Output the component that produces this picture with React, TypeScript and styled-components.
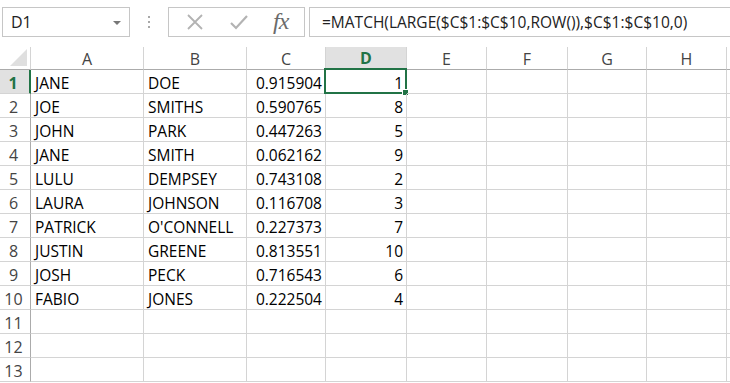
import React from "react";
import styled, { createGlobalStyle } from "styled-components";

const GlobalStyle = createGlobalStyle`
  html, body {
    margin: 0;
    padding: 0;
    background: #ffffff;
    overflow: hidden;
  }
  body {
    font-family: "Open Sans", "Liberation Sans", sans-serif;
  }
`;

const Page = styled.div`
  width: 730px;
  height: 383px;
  overflow: hidden;
  background: #ffffff;
`;

const FormulaBar = styled.div`
  display: flex;
  align-items: flex-start;
  height: 47px;
  padding: 7px 0 0 2px;
  box-sizing: border-box;
`;

const NameBox = styled.div`
  width: 128px;
  height: 30px;
  box-sizing: border-box;
  border: 1px solid #c6c6c6;
  display: flex;
  align-items: center;
  justify-content: space-between;
  padding: 0 8px 0 8px;
  font-size: 16px;
  color: #222;
`;

const Caret = styled.div`
  width: 0;
  height: 0;
  border-left: 4px solid transparent;
  border-right: 4px solid transparent;
  border-top: 4px solid #777;
  margin-top: 1px;
`;

const Dots = styled.div`
  width: 38px;
  height: 30px;
  display: flex;
  flex-direction: column;
  align-items: center;
  justify-content: center;
  gap: 3px;
`;

const Dot = styled.span`
  width: 2px;
  height: 2px;
  background: #a8a8a8;
`;

const ButtonBox = styled.div`
  width: 137px;
  height: 30px;
  box-sizing: border-box;
  border: 1px solid #c6c6c6;
  display: flex;
  align-items: center;
  justify-content: space-around;
  padding: 0 4px;
`;

const Fx = styled.span`
  font-family: "Liberation Serif", "DejaVu Serif", serif;
  font-style: italic;
  font-size: 24px;
  color: #6b6b6b;
  line-height: 1;
  margin-top: -3px;
  letter-spacing: -1px;
`;

const FormulaInput = styled.div`
  flex: 1;
  height: 30px;
  margin-left: 4px;
  box-sizing: border-box;
  border: 1px solid #c6c6c6;
  border-right: none;
  display: flex;
  align-items: center;
  padding-left: 12px;
  font-size: 15.5px;
  color: #222;
  white-space: nowrap;
`;

const Grid = styled.div`
  display: grid;
  grid-template-columns: 31px 113px 103px 79px 81px 80px 81px 79px 80px 60px;
  grid-auto-rows: 24px;
  grid-template-rows: 23px;
`;

const Corner = styled.div`
  position: relative;
  border-right: 1px solid #d4d4d4;
  border-bottom: 1px solid #ababab;
  &::after {
    content: "";
    position: absolute;
    right: 3px;
    bottom: 3px;
    width: 0;
    height: 0;
    border-left: 17px solid transparent;
    border-bottom: 17px solid #dfdfdf;
  }
`;

const ColHead = styled.div<{ $active?: boolean }>`
  display: flex;
  align-items: center;
  justify-content: center;
  font-size: 16px;
  padding-top: 1px;
  color: ${(p) => (p.$active ? "#217346" : "#444")};
  font-weight: ${(p) => (p.$active ? 700 : 400)};
  background: ${(p) => (p.$active ? "#e1e1e1" : "#ffffff")};
  border-right: 1px solid #d4d4d4;
  border-bottom: ${(p) => (p.$active ? "2px solid #217346" : "1px solid #ababab")};
  box-sizing: border-box;
`;

const RowHead = styled.div<{ $active?: boolean }>`
  display: flex;
  align-items: center;
  justify-content: center;
  font-size: 16px;
  padding: 2px 3px 0 0;
  color: ${(p) => (p.$active ? "#217346" : "#444")};
  font-weight: ${(p) => (p.$active ? 700 : 400)};
  background: ${(p) => (p.$active ? "#e1e1e1" : "#ffffff")};
  border-right: ${(p) => (p.$active ? "2px solid #217346" : "1px solid #ababab")};
  border-bottom: 1px solid #d4d4d4;
  box-sizing: border-box;
`;

const Cell = styled.div<{ $num?: boolean }>`
  position: relative;
  display: flex;
  align-items: center;
  justify-content: ${(p) => (p.$num ? "flex-end" : "flex-start")};
  padding: 2px 3px 0 4px;
  font-size: 15.5px;
  color: #000;
  border-right: 1px solid #d4d4d4;
  border-bottom: 1px solid #d4d4d4;
  box-sizing: border-box;
  white-space: nowrap;
  overflow: visible;
`;

const Selection = styled.div`
  position: absolute;
  left: -2px;
  top: -2px;
  right: -1px;
  bottom: -1px;
  border: 2px solid #217346;
  pointer-events: none;
  &::after {
    content: "";
    position: absolute;
    right: -4px;
    bottom: -4px;
    width: 5px;
    height: 5px;
    background: #217346;
    border: 1px solid #fff;
  }
`;

const rows: [string, string, string, string][] = [
  ["JANE", "DOE", "0.915904", "1"],
  ["JOE", "SMITHS", "0.590765", "8"],
  ["JOHN", "PARK", "0.447263", "5"],
  ["JANE", "SMITH", "0.062162", "9"],
  ["LULU", "DEMPSEY", "0.743108", "2"],
  ["LAURA", "JOHNSON", "0.116708", "3"],
  ["PATRICK", "O'CONNELL", "0.227373", "7"],
  ["JUSTIN", "GREENE", "0.813551", "10"],
  ["JOSH", "PECK", "0.716543", "6"],
  ["FABIO", "JONES", "0.222504", "4"],
  ["", "", "", ""],
  ["", "", "", ""],
  ["", "", "", ""],
];

const letters = ["A", "B", "C", "D", "E", "F", "G", "H", ""];

const CrossIcon = () => (
  <svg width="20" height="20" viewBox="0 0 20 20">
    <path d="M3 3 L17 17 M17 3 L3 17" stroke="#b3b3b3" strokeWidth="1.8" fill="none" />
  </svg>
);

const CheckIcon = () => (
  <svg width="22" height="20" viewBox="0 0 22 20">
    <path d="M3 11 L8 16 L19 4" stroke="#b3b3b3" strokeWidth="2.2" fill="none" />
  </svg>
);

const App = () => {
  return (
    <Page>
      <GlobalStyle />
      <FormulaBar>
        <NameBox>
          D1
          <Caret />
        </NameBox>
        <Dots>
          <Dot />
          <Dot />
          <Dot />
        </Dots>
        <ButtonBox>
          <CrossIcon />
          <CheckIcon />
          <Fx>fx</Fx>
        </ButtonBox>
        <FormulaInput>=MATCH(LARGE($C$1:$C$10,ROW()),$C$1:$C$10,0)</FormulaInput>
      </FormulaBar>
      <Grid>
        <Corner />
        {letters.map((l, i) => (
          <ColHead key={i} $active={l === "D"}>
            {l}
          </ColHead>
        ))}
        {rows.map((r, i) => (
          <React.Fragment key={i}>
            <RowHead $active={i === 0}>{i + 1}</RowHead>
            <Cell>{r[0]}</Cell>
            <Cell>{r[1]}</Cell>
            <Cell $num>{r[2]}</Cell>
            <Cell $num>
              {r[3]}
              {i === 0 && <Selection />}
            </Cell>
            <Cell />
            <Cell />
            <Cell />
            <Cell />
            <Cell />
          </React.Fragment>
        ))}
      </Grid>
    </Page>
  );
};

export default App;
